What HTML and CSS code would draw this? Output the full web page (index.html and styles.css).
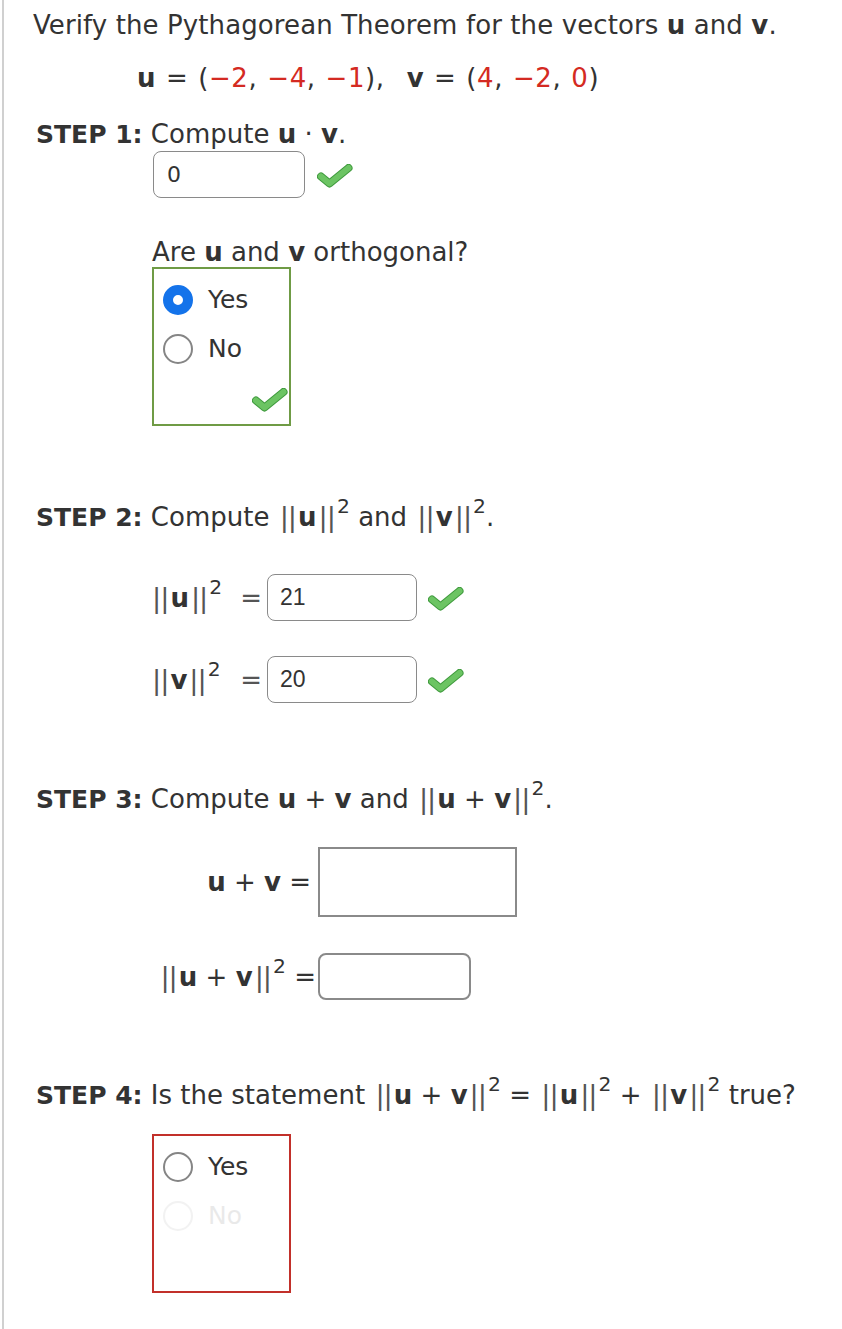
FILE: index.html
```html
<!DOCTYPE html>
<html>
<head>
<meta charset="utf-8">
<link rel="stylesheet" href="styles.css">
</head>
<body>
<div class="page">
  <p class="title">Verify the Pythagorean Theorem for the vectors <b>u</b> and <b>v</b>.</p>
  <p class="vectors"><b>u</b> = (<span class="r">−2</span>, <span class="r">−4</span>, <span class="r">−1</span>),<span class="gap"></span><b>v</b> = (<span class="r">4</span>, <span class="r">−2</span>, <span class="r">0</span>)</p>

  <p class="step step1"><b>STEP 1:</b> Compute <b>u</b> · <b>v</b>.</p>
  <div class="row row-dot">
    <span class="field f-dot">0</span>
    <svg class="check" viewBox="0 0 36 24" width="36" height="24"><path d="M4 12.5 L12.5 19.5 L31.5 4" fill="none" stroke="#3f9a3d" stroke-width="8" stroke-linejoin="round" stroke-linecap="round"/><path d="M4 12.5 L12.5 19.5 L31.5 4" fill="none" stroke="#6cc463" stroke-width="6" stroke-linejoin="round" stroke-linecap="round"/></svg>
  </div>

  <p class="question">Are <b>u</b> and <b>v</b> orthogonal?</p>
  <div class="choices ok">
    <div class="choice"><span class="radio on"></span><span>Yes</span></div>
    <div class="choice"><span class="radio"></span><span>No</span></div>
    <svg class="check box-check" viewBox="0 0 36 24" width="36" height="24"><path d="M4 12.5 L12.5 19.5 L31.5 4" fill="none" stroke="#3f9a3d" stroke-width="8" stroke-linejoin="round" stroke-linecap="round"/><path d="M4 12.5 L12.5 19.5 L31.5 4" fill="none" stroke="#6cc463" stroke-width="6" stroke-linejoin="round" stroke-linecap="round"/></svg>
  </div>

  <p class="step step2"><b>STEP 2:</b> Compute <span class="nb">||</span><b>u</b><span class="nb">||</span><sup>2</sup> and <span class="nb">||</span><b>v</b><span class="nb">||</span><sup>2</sup>.</p>
  <div class="row row-u">
    <span class="lbl"><span><span class="nb">||</span><b>u</b><span class="nb">||</span><sup>2</sup></span><span class="eq">=</span></span>
    <span class="field f-num">21</span>
    <svg class="check" viewBox="0 0 36 24" width="36" height="24"><path d="M4 12.5 L12.5 19.5 L31.5 4" fill="none" stroke="#3f9a3d" stroke-width="8" stroke-linejoin="round" stroke-linecap="round"/><path d="M4 12.5 L12.5 19.5 L31.5 4" fill="none" stroke="#6cc463" stroke-width="6" stroke-linejoin="round" stroke-linecap="round"/></svg>
  </div>
  <div class="row row-v">
    <span class="lbl"><span><span class="nb">||</span><b>v</b><span class="nb">||</span><sup>2</sup></span><span class="eq">=</span></span>
    <span class="field f-num">20</span>
    <svg class="check" viewBox="0 0 36 24" width="36" height="24"><path d="M4 12.5 L12.5 19.5 L31.5 4" fill="none" stroke="#3f9a3d" stroke-width="8" stroke-linejoin="round" stroke-linecap="round"/><path d="M4 12.5 L12.5 19.5 L31.5 4" fill="none" stroke="#6cc463" stroke-width="6" stroke-linejoin="round" stroke-linecap="round"/></svg>
  </div>

  <p class="step step3"><b>STEP 3:</b> Compute <b>u</b> + <b>v</b> and <span class="nb">||</span><b>u</b> + <b>v</b><span class="nb">||</span><sup>2</sup>.</p>
  <div class="row row-sum">
    <span class="lbl"><b>u</b> + <b>v</b> =</span>
    <span class="field f-sum"></span>
  </div>
  <div class="row row-norm">
    <span class="lbl"><span class="nb">||</span><b>u</b> + <b>v</b><span class="nb">||</span><sup>2</sup> =</span>
    <span class="field f-norm"></span>
  </div>

  <p class="step step4"><b>STEP 4:</b> Is the statement <span class="nb">||</span><b>u</b> + <b>v</b><span class="nb">||</span><sup>2</sup> = <span class="nb">||</span><b>u</b><span class="nb">||</span><sup>2</sup> + <span class="nb">||</span><b>v</b><span class="nb">||</span><sup>2</sup> true?</p>
  <div class="choices bad">
    <div class="choice"><span class="radio"></span><span>Yes</span></div>
    <div class="choice faded"><span class="radio"></span><span>No</span></div>
  </div>
</div>
</body>
</html>
```

FILE: styles.css
```css
html, body {
  margin: 0;
  padding: 0;
  background: #fff;
}
body {
  font-family: "DejaVu Sans", Verdana, sans-serif;
  color: #333;
}
.page {
  margin-left: 2px;
  border-left: 2px solid #d0d0d0;
  min-height: 1329px;
  box-sizing: border-box;
  padding: 10px 0 0 29px;
  display: flex;
  flex-direction: column;
  align-items: flex-start;
}
p { margin: 0; white-space: nowrap; }
b { font-weight: bold; }
.r { color: #d42a22; }

.title {
  font-size: 26px;
  line-height: 30px;
  letter-spacing: 0.1px;
}
.vectors {
  font-size: 26px;
  line-height: 30px;
  margin: 23px 0 0 104px;
  letter-spacing: 0.6px;
  word-spacing: 1px;
}
.gap { display: inline-block; width: 22px; }

.step {
  font-size: 26px;
  line-height: 30px;
}
.step > b:first-child { font-size: 25px; }
.step1 { margin: 26px 0 0 3px; }
.step2 { margin: 76px 0 0 3px; }
.step3 { margin: 81px 0 0 3px; }
.step4 { margin: 80px 0 0 3px; }

.nb {
  font-weight: normal;
  color: #555;
  letter-spacing: -1px;
  margin: 0 2px;
  font-size: 1.05em;
}
sup {
  font-size: 0.78em;
  line-height: 0;
  vertical-align: 0.62em;
  font-weight: normal;
}

.row {
  display: flex;
  align-items: center;
}
.field {
  box-sizing: border-box;
  border: 1.5px solid #8a8a8a;
  border-radius: 8px;
  background: #fff;
  display: flex;
  align-items: center;
  padding-left: 13px;
  font-size: 22px;
  color: #333;
}
.check { display: block; }

.row-dot { margin: 1px 0 0 120px; }
.f-dot { width: 152px; height: 47px; }
.row-dot .check { margin-left: 12px; margin-top: 2px; }

.question {
  font-size: 26px;
  line-height: 30px;
  margin: 39px 0 0 119px;
}

.choices {
  box-sizing: border-box;
  width: 139px;
  height: 159px;
  margin-left: 119px;
  padding: 6px 0 0 9px;
  position: relative;
  font-size: 25px;
}
.choices.ok { border: 2px solid #6f9b45; }
.choices.bad { border: 2px solid #c2302a; margin-top: 23px; }
.choice {
  display: flex;
  align-items: center;
  height: 49px;
  gap: 15px;
}
.radio {
  box-sizing: border-box;
  width: 30px;
  height: 30px;
  border-radius: 50%;
  border: 2.5px solid #858585;
  background: #fff;
  flex: none;
}
.radio.on {
  border: 10px solid #1473ea;
}
.faded { opacity: 0.1; }
.box-check {
  position: absolute;
  right: 1px;
  bottom: 12px;
}

.lbl {
  font-size: 26px;
  white-space: nowrap;
}
.eq { color: #555; }
.row-u, .row-v { padding-left: 117px; }
.row-u { margin-top: 41px; }
.row-v { margin-top: 35px; }
.row-u .lbl, .row-v .lbl {
  width: 117px;
  display: flex;
  justify-content: space-between;
  align-items: baseline;
  padding-right: 5px;
  box-sizing: border-box;
}
.f-num {
  width: 150px;
  height: 47px;
  font-family: "Liberation Sans", Arial, sans-serif;
  font-size: 23px;
  padding-left: 12px;
}
.row-u .check, .row-v .check { margin-left: 11px; margin-top: 2px; }

.row-sum { margin: 32px 0 0 0; }
.row-sum .lbl { width: 285px; text-align: right; padding-right: 7px; box-sizing: border-box; }
.f-sum {
  width: 199px;
  height: 70px;
  border-radius: 0;
  border: 2px solid #8a8a8a;
}
.row-norm { margin: 36px 0 0 0; }
.row-norm .lbl { width: 285px; text-align: right; padding-right: 2px; box-sizing: border-box; }
.f-norm {
  width: 153px;
  height: 47px;
  border: 2px solid #8a8a8a;
}
```
